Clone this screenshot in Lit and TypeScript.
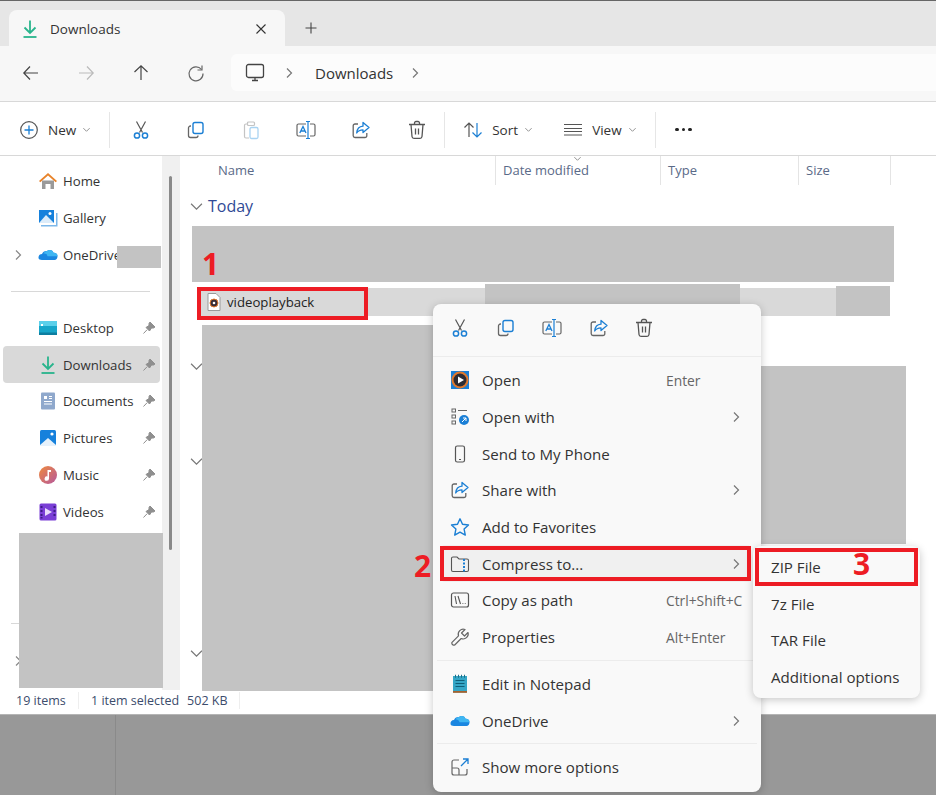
import { LitElement, html, css } from 'lit';
import { customElement } from 'lit/decorators.js';

// shared icons
const chevRight = html`<svg class="chev" viewBox="0 0 12 12"><path d="M4 1.5 8.5 6 4 10.5" fill="none" stroke="#777" stroke-width="1.2"/></svg>`;
const chevDown = html`<svg class="mini" viewBox="0 0 10 10"><path d="M1.5 3.5 5 7l3.5-3.5" fill="none" stroke="#888" stroke-width="1"/></svg>`;
const groupChev = html`<svg class="gchev" viewBox="0 0 12 12"><path d="M1 3.5 6 8.5l5-5" fill="none" stroke="#777" stroke-width="1.1"/></svg>`;
const twistChev = html`<svg class="chev" viewBox="0 0 12 12"><path d="M4 1.500 8.500 6 4 10.500" fill="none" stroke="#888" stroke-width="1.200"/></svg>`;

const cut = html`<svg class="ic" viewBox="0 0 20 20" fill="none"><path d="M5.5 1.5 11.5 12.5M14.5 1.5 8.5 12.5" stroke="#555" stroke-width="1.2"/><circle cx="6" cy="15.5" r="2.6" stroke="#1b7fd4" stroke-width="1.5"/><circle cx="14" cy="15.5" r="2.6" stroke="#1b7fd4" stroke-width="1.5"/></svg>`;
const copy = html`<svg class="ic" viewBox="0 0 20 20" fill="none"><path d="M5 6H4.500A2 2 0 0 0 2.500 8v7.500a2 2 0 0 0 2 2H10a2 2 0 0 0 2-2" stroke="#666" stroke-width="1.300"/><rect x="7" y="2.500" width="10" height="11" rx="2" stroke="#1b7fd4" stroke-width="1.400"/></svg>`;
const paste = html`<svg class="ic" viewBox="0 0 20 20" fill="none"><path d="M7 4H5a1.500 1.500 0 0 0-1.500 1.500v11A1.500 1.500 0 0 0 5 18h3" stroke="#c4c4c4" stroke-width="1.200"/><rect x="6.500" y="2" width="7" height="3.500" rx="1" stroke="#c4c4c4" stroke-width="1.200"/><rect x="9" y="7.500" width="8" height="11" rx="1.500" stroke="#a9d3f2" stroke-width="1.300"/></svg>`;
const rename = html`<svg class="ic wide" viewBox="0 0 22 20" fill="none"><path d="M11 4H3.500A1.500 1.500 0 0 0 2 5.500v9A1.500 1.500 0 0 0 3.500 16H11M15 4h3.500A1.500 1.500 0 0 1 20 5.500v9a1.500 1.500 0 0 1-1.500 1.500H15" stroke="#666" stroke-width="1.200"/><path d="M4.800 13 8 6.500l3 6.500M5.800 11h4.400" stroke="#1b7fd4" stroke-width="1.300"/><path d="M11 1.500h4M13 1.500v17M11 18.500h4" stroke="#1b7fd4" stroke-width="1.200"/></svg>`;
const share = html`<svg class="ic" viewBox="0 0 20 20" fill="none"><path d="M7 4H4a1.800 1.800 0 0 0-1.800 1.800v10A1.800 1.800 0 0 0 4 17.500h10a1.800 1.800 0 0 0 1.800-1.800V13" stroke="#666" stroke-width="1.300"/><path d="M12 2.500 18 7.500l-6 5V9.800c-3 0-5 1-6.300 3.200.3-4 2.500-6.500 6.300-6.800Z" stroke="#1b7fd4" stroke-width="1.300" stroke-linejoin="round"/></svg>`;
const trash = html`<svg class="ic" viewBox="0 0 20 20" fill="none"><path d="M2 4.500h16M7.500 4.500V3a1.500 1.500 0 0 1 1.500-1.500h2A1.500 1.500 0 0 1 12.500 3v1.500M4 4.500l1 12a2 2 0 0 0 2 1.800h6a2 2 0 0 0 2-1.800l1-12M8.500 8.500v6M11.500 8.500v6" stroke="#555" stroke-width="1.300"/></svg>`;
const cloud = html`<svg class="ic" viewBox="0 0 20 20"><path d="M.5 13a3.800 3.800 0 0 1 3.500-4 4.800 4.800 0 0 1 5-3c1.500-1.500 5.500-1.500 6.500 1.700a3.500 3.500 0 0 1 4 3.500c0 2-1.300 3.800-3 3.800H4c-2 0-3.500-.8-3.500-2Z" fill="#1a86e0"/><path d="M9 6c1.500-1.500 5.500-1.500 6.500 1.700a3.500 3.500 0 0 1 4 3.500H9.500C9 9 7.500 8.300 5.500 8.600 6.300 6.800 8 5.800 9 6Z" fill="#3fb6f2"/></svg>`;
const download = html`<svg class="ic" viewBox="0 0 20 20" fill="none"><path d="M10 1.500v12.500M4.500 8.500 10 14l5.500-5.500" stroke="#28b48c" stroke-width="1.800"/><path d="M3.500 18h13" stroke="#28b48c" stroke-width="1.800"/></svg>`;
const pin = html`<svg class="pin" viewBox="0 0 14 14"><path d="M8 1 13 6 11.500 7 9.500 7 7.500 10 4 6.500 7 4.500V2.500ZM5 8.800 1.500 12.500" fill="#8f8f8f" stroke="#8f8f8f" stroke-width="1"/></svg>`;

const navIcons: Record<string, unknown> = {
  home: html`<svg class="ic" viewBox="0 0 20 20"><path d="M4 9.500h12V18H12.500v-5h-5v5H4Z" fill="#9a9a9a"/><path d="M1 10 10 2l9 8-1.300 1.300L10 4.500 2.300 11.300Z" fill="#e8832a"/></svg>`,
  gallery: html`<svg class="ic" viewBox="0 0 20 20"><path d="M1 2h15v13H1Z" fill="#1681dc"/><path d="M1 15 8 7l8 8Z" fill="#dcecfa"/><circle cx="12" cy="5.500" r="1.500" fill="#fff"/><path d="M3 17h15V5h1.500v13.500H3Z" fill="#7db8ea"/></svg>`,
  desktop: html`<svg class="ic" viewBox="0 0 20 20"><rect x="1" y="3" width="18" height="14" rx="1.500" fill="#17a6c9"/><path d="M1 3h18v5H1Z" fill="#5bd0ea"/><rect x="1" y="14.500" width="18" height="2.500" fill="#0d7ea0"/><rect x="3" y="6" width="2" height="2" fill="#fff"/></svg>`,
  documents: html`<svg class="ic" viewBox="0 0 20 20"><rect x="3" y="1.500" width="14" height="17" rx="1" fill="#8fa8cc"/><path d="M6 5h3v3H6Zm5 0h3v1h-3Zm0 2h3v1h-3ZM6 10h8v1H6Zm0 2.500h8v1H6Z" fill="#fff"/></svg>`,
  pictures: html`<svg class="ic" viewBox="0 0 20 20"><rect x="2" y="2" width="16" height="16" rx="1.500" fill="#1681dc"/><path d="M2 17l8-7 8 7v1H2Z" fill="#e6f1fb"/><circle cx="14" cy="6" r="1.600" fill="#fff"/></svg>`,
  music: html`<svg class="ic" viewBox="0 0 20 20"><defs><linearGradient id="mu" x1="0" y1="0" x2="1" y2="1"><stop offset="0" stop-color="#ef8a3c"/><stop offset="1" stop-color="#b5589e"/></linearGradient></defs><circle cx="10" cy="10" r="9" fill="url(#mu)"/><path d="M9.500 5h3.500v2h-2v6.500a2.200 2.200 0 1 1-1.500-2Z" fill="#fff"/></svg>`,
  videos: html`<svg class="ic" viewBox="0 0 20 20"><rect x="1.500" y="1.500" width="17" height="17" rx="1.500" fill="#7a3fd6"/><path d="M7 6l7 4-7 4Z" fill="#e9ddfb"/><path d="M2.500 4h2v2h-2Zm0 4h2v2h-2Zm0 4h2v2h-2Zm0 3h2v1.500h-2ZM15.500 4h2v2h-2Zm0 4h2v2h-2Zm0 4h2v2h-2Z" fill="#3d1a86"/></svg>`,
};

const nav = [
  { key: 'home', label: 'Home' },
  { key: 'gallery', label: 'Gallery' },
  { key: 'cloud', label: 'OneDrive', twist: true },
  { sep: true },
  { key: 'desktop', label: 'Desktop', pin: true },
  { key: 'download', label: 'Downloads', pin: true, active: true },
  { key: 'documents', label: 'Documents', pin: true },
  { key: 'pictures', label: 'Pictures', pin: true },
  { key: 'music', label: 'Music', pin: true },
  { key: 'videos', label: 'Videos', pin: true },
];

const menuItems = [
  { icon: html`<svg class="ic" viewBox="0 0 20 20"><rect x="1" y="1" width="18" height="18" fill="#1a7fd6"/><circle cx="10" cy="10" r="8.500" fill="#e0782c"/><circle cx="10" cy="10" r="6.500" fill="#2c2c34"/><path d="M8 6.500 14 10l-6 3.500Z" fill="#fff"/></svg>`, label: 'Open', short: 'Enter' },
  { icon: html`<svg class="ic" viewBox="0 0 20 20" fill="none"><rect x="2" y="2" width="3.500" height="3" stroke="#666"/><rect x="2" y="8" width="3.500" height="3" stroke="#666"/><rect x="2" y="14" width="3.500" height="3" stroke="#666"/><path d="M8 3.500h9" stroke="#666"/><circle cx="14" cy="13" r="5" fill="#1a7fd6"/><path d="M12 15l4-4m-3 0h3v3" stroke="#fff"/></svg>`, label: 'Open with', sub: true },
  { icon: html`<svg class="ic" viewBox="0 0 20 20" fill="none"><rect x="5.500" y="2" width="9" height="16" rx="1.800" stroke="#555" stroke-width="1.200"/><path d="M9 15.500h2" stroke="#555"/></svg>`, label: 'Send to My Phone' },
  { icon: share, label: 'Share with', sub: true },
  { icon: html`<svg class="ic" viewBox="0 0 20 20" fill="none"><path d="M10 1.800 12.500 7.300l6 .7-4.400 4.100 1.200 6L10 15.100 4.700 18.100l1.200-6L1.500 8l6-.7Z" stroke="#1b7fd4" stroke-width="1.400" stroke-linejoin="round"/></svg>`, label: 'Add to Favorites' },
  { icon: html`<svg class="ic" viewBox="0 0 20 20" fill="none"><path d="M1.500 16V4.500A1.500 1.500 0 0 1 3 3h4l2 2h8a1.500 1.500 0 0 1 1.500 1.500V16A1.500 1.500 0 0 1 17 17.500H3A1.500 1.500 0 0 1 1.500 16Z" stroke="#555" stroke-width="1.100"/><path d="M14 5v12.500" stroke="#1b7fd4" stroke-width="2" stroke-dasharray="2 1.500"/></svg>`, label: 'Compress to...', sub: true, hot: true },
  { icon: html`<svg class="ic" viewBox="0 0 20 20" fill="none"><rect x="1.500" y="3" width="17" height="14" rx="2" stroke="#555" stroke-width="1.200"/><path d="M5 6l1.500 8M8 6l2.500 8M12.500 13.500h.8m1.500 0h.8" stroke="#555" stroke-width="1.100"/></svg>`, label: 'Copy as path', short: 'Ctrl+Shift+C' },
  { icon: html`<svg class="ic" viewBox="0 0 20 20" fill="none"><path d="M18 5.500 14.500 9 11.500 6 15 2.500a5 5 0 0 0-6.500 6.300L2 15.300a2 2 0 0 0 0 1.700l1 1a2 2 0 0 0 1.700 0l6.500-6.500A5 5 0 0 0 18 5.500Z" stroke="#666" stroke-width="1.200" stroke-linejoin="round"/></svg>`, label: 'Properties', short: 'Alt+Enter' },
  { sep: true },
  { icon: html`<svg class="ic" viewBox="0 0 20 20"><rect x="3" y="2" width="14" height="16.500" fill="#35a6c6"/><path d="M3 17h14v1.800H3Z" fill="#a5622f"/><path d="M5.500 6h9v1h-9Zm0 3h9v1h-9Zm0 3h9v1h-9Z" fill="#0f5f78"/><path d="M5 .8h1v3H5Zm3 0h1v3H8Zm3 0h1v3h-1Zm3 0h1v3h-1Z" fill="#1d6f88"/></svg>`, label: 'Edit in Notepad' },
  { icon: cloud, label: 'OneDrive', sub: true },
  { sep: true },
  { icon: html`<svg class="ic" viewBox="0 0 20 20" fill="none"><path d="M9 3H4a2 2 0 0 0-2 2v11a2 2 0 0 0 2 2h11a2 2 0 0 0 2-2v-4M2 11h5a2 2 0 0 1 2 2v5" stroke="#666" stroke-width="1.200"/><path d="M11 9l7-7m-5 0h5v5" stroke="#1b7fd4" stroke-width="1.300"/></svg>`, label: 'Show more options' },
];

@customElement('app-root')
export class AppRoot extends LitElement {
  static styles = css`
    :host {
      display: block;
      position: relative;
      width: 936px;
      height: 795px;
      overflow: hidden;
      background: #fff;
      font-family: "Open Sans", "Noto Sans", sans-serif;
      font-size: 13.2px;
      color: #333;
    }
    .page { display: flex; flex-direction: column; height: 795px; }
    svg { display: block; flex: none; }
    .ic { width: 20px; height: 20px; }
    .ic.wide { width: 22px; }
    .chev { width: 12px; height: 12px; }
    .mini { width: 9px; height: 9px; }
    .gchev { width: 13px; height: 13px; }
    .pin { width: 14px; height: 14px; }

    .tabs { height: 46px; flex: none; box-sizing: border-box; background: #e6e6e6; border-top: 1px solid #666; padding: 9px 0 0 9px; display: flex; }
    .tab { width: 276px; height: 37px; box-sizing: border-box; background: #f7f7f7; border-radius: 8px 8px 0 0; padding: 0 18px 0 11px; display: flex; align-items: center; gap: 10px; font-size: 13.500px; }
    .tab span { flex: 1; }
    .new-tab { margin: 12px 0 0 20px; }

    .address { height: 56px; flex: none; box-sizing: border-box; background: #f7f7f7; border-bottom: 1px solid #d8d8d8; display: flex; align-items: center; padding: 0 0 2px 21px; }
    .nav-btn { width: 20px; height: 20px; margin-right: 35px; }
    .crumbs { flex: 1; margin-left: -10px; height: 37px; background: #fcfcfc; border-radius: 6px 0 0 6px; display: flex; align-items: center; padding-left: 14px; font-size: 15px; }
    .crumbs .chev { margin: 0 20px 0 18px; }
    .crumbs .pc { width: 20px; height: 20px; }
    .crumbs .last { margin-left: -2px; }

    .toolbar { height: 54px; flex: none; box-sizing: border-box; border-bottom: 1px solid #d8d8d8; display: flex; align-items: center; padding-top: 2px; font-size: 13.500px; }
    .tool { display: flex; align-items: center; }
    .tool-new { width: 109px; padding-left: 19px; box-sizing: border-box; }
    .tool-new .label { margin: 0 6px 0 9px; }
    .vsep { width: 1px; height: 36px; background: #e6e6e6; flex: none; }
    .cell { width: 55.2px; display: flex; justify-content: center; }
    .icons { display: flex; margin-left: 3px; }
    .tool-sort { margin-left: 18px; width: 100px; }
    .tool-sort .label, .tool-view .label { margin: 0 6px 0 9px; }
    .tool-view { width: 92px; }
    .more { margin-left: 19px; display: flex; gap: 3px; }
    .more i { width: 3.500px; height: 3.500px; border-radius: 50%; background: #222; }

    .main { flex: 1; display: flex; min-height: 0; }
    .side { width: 162px; flex: none; box-sizing: border-box; padding: 7px 2px 0 3px; }
    .row { height: 36.8px; display: flex; align-items: center; padding-left: 9px; border-radius: 4px; }
    .row.active { background: #d9d9d9; }
    .twist { width: 26px; flex: none; }
    .row .label { flex: 1; margin-left: 5px; }
    .row .pin { margin-right: 4px; }
    .side hr { border: 0; height: 1px; background: #d8d8d8; margin: 18px 10px 17px 8px; }
    .side hr.lower { margin-top: 93px; margin-bottom: 18px; }
    .gutter { width: 17px; flex: none; background: #f0f0f0; display: flex; justify-content: center; padding-top: 20px; box-sizing: border-box; }
    .thumb { width: 3px; height: 374px; border-radius: 2px; background: #8a8a8a; }

    .files { flex: 1; padding-left: 1px; border-left: 1px solid #f0f0f0; min-width: 0; }
    .head { height: 29px; display: grid; grid-template-columns: 315px 165px 138px 92px; color: #5a6a88; font-size: 13px; }
    .head div { border-right: 1px solid #e4e4e4; padding: 5px 0 0 7px; box-sizing: border-box; position: relative; }
    .head div:first-child { padding-left: 37px; }
    .head .sorted { position: absolute; left: 77px; top: -2px; }
    .group { display: flex; align-items: center; height: 24px; margin: 9px 0 8px 9px; color: #2f4a96; font-size: 16px; gap: 5px; }
    .blank { height: 56px; width: 702px; margin-left: 11px; background: #c3c3c3; }
    .file { height: 28px; width: 693px; margin: 6px 0 0 16px; background: #d9d9d9; display: flex; align-items: center; padding-left: 10px; box-sizing: border-box; gap: 6px; color: #222; font-size: 13.200px; }
    .file svg { width: 14px; height: 18px; }
    .fold { position: absolute; left: 190px; }
    .fold.a { top: 360px; } .fold.b { top: 455px; } .fold.c { top: 647px; }

    .status { height: 24px; flex: none; box-sizing: border-box; display: flex; align-items: center; padding: 0 0 4px 16px; font-size: 12.500px; color: #3c4c6c; }
    .status span:nth-child(1) { width: 62px; border-right: 1px solid #eee; margin-right: 12px; }
    .status span:nth-child(2) { margin-right: 8px; }
    .status span:nth-child(3) { padding-right: 11px; border-right: 1px solid #eee; }
    .task { height: 81px; flex: none; box-sizing: border-box; background: #989898; border-top: 1px solid #b5b5b5; }
    .task div { width: 115px; height: 100%; border-right: 1px solid #8a8a8a; }

    .mask { position: absolute; background: #c3c3c3; }
    .m-drive { left: 117px; top: 246px; width: 44px; height: 22px; }
    .m-side { left: 19px; top: 533px; width: 144px; height: 155px; }
    .m-list { left: 202px; top: 325px; width: 232px; height: 366px; }
    .m-date { left: 485px; top: 284px; width: 255px; height: 20px; }
    .m-size { left: 836px; top: 286px; width: 54px; height: 30px; }
    .m-right { left: 761px; top: 366px; width: 145px; height: 178px; }

    .menu { position: absolute; background: #f9f9f9; border-radius: 8px; box-shadow: 0 2px 8px rgba(0, 0, 0, .22); color: #333; font-size: 15.100px; }
    .ctx { left: 433px; top: 304px; width: 328px; height: 488px; }
    .quick { height: 53px; box-sizing: border-box; border-bottom: 1px solid #ececec; display: flex; align-items: center; padding: 0 0 4px 17px; gap: 25.500px; }
    .list { padding-top: 5px; }
    .item { height: 36.7px; display: grid; grid-template-columns: 20px 196px 1fr 12px; align-items: center; padding: 0 19px 0 17px; }
    .item.hot { background: #f0f0f0; margin: 0 10px 0 8px; padding: 0 9px 0 9px; border-radius: 4px; }
    .item .label { margin-left: 12px; white-space: nowrap; }
    .item .short { font-size: 13.800px; color: #666; white-space: nowrap; }
    .item .chev { grid-column: 4; }
    .list hr { border: 0; height: 1px; background: #ececec; margin: 4px 4px 5px 4px; }

    .subm { left: 753px; top: 546px; width: 167px; height: 152px; padding-top: 2.500px; box-sizing: border-box; }
    .subitem { height: 36.8px; display: flex; align-items: center; padding-left: 18px; }

    .mark { position: absolute; box-sizing: border-box; border: 4px solid #ed1c24; }
    .mark1 { left: 197px; top: 287px; width: 171px; height: 33px; }
    .mark2 { left: 440px; top: 546px; width: 311px; height: 35px; }
    .mark3 { left: 755px; top: 548px; width: 163px; height: 38px; }
    .num { position: absolute; color: #ed1c24; font: bold 30px/1 "Open Sans", sans-serif; }
    .n1 { left: 202px; top: 249px; }
    .n2 { left: 414px; top: 551px; }
    .n3 { left: 853px; top: 549px; }
  `;

  renderNav() {
    return nav.map((n) => {
      if (n.sep) return html`<hr />`;
      const icon = n.key === 'cloud' ? cloud : n.key === 'download' ? download : navIcons[n.key!];
      return html`<div class="row ${n.active ? 'active' : ''}">
        <div class="twist">${n.twist ? twistChev : ''}</div>
        ${icon}
        <span class="label">${n.label}</span>
        ${n.pin ? pin : ''}
      </div>`;
    });
  }

  renderMenu() {
    return menuItems.map((m) => {
      if (m.sep) return html`<hr />`;
      return html`<div class="item ${m.hot ? 'hot' : ''}">
        ${m.icon}
        <span class="label">${m.label}</span>
        ${m.short ? html`<span class="short">${m.short}</span>` : ''}
        ${m.sub ? chevRight : ''}
      </div>`;
    });
  }

  render() {
    return html`
      <div class="page">
        <div class="tabs">
          <div class="tab">
            ${download}
            <span>Downloads</span>
            <svg class="chev" viewBox="0 0 12 12"><path d="M1.500 1.500l9 9m0-9-9 9" stroke="#333" stroke-width="1.100"/></svg>
          </div>
          <svg class="chev new-tab" viewBox="0 0 12 12"><path d="M6 .5v11M.5 6h11" stroke="#444" stroke-width="1.100"/></svg>
        </div>
        <div class="address">
          <svg class="nav-btn" viewBox="0 0 20 20" fill="none"><path d="M17 10H3M9 3.500 2.800 10 9 16.500" stroke="#444" stroke-width="1.200"/></svg>
          <svg class="nav-btn" viewBox="0 0 20 20" fill="none"><path d="M3 10h14M11 3.500l6.200 6.500L11 16.500" stroke="#bbb" stroke-width="1.200"/></svg>
          <svg class="nav-btn" viewBox="0 0 20 20" fill="none"><path d="M10 17V3M3.500 9 10 2.800 16.500 9" stroke="#444" stroke-width="1.200"/></svg>
          <svg class="nav-btn" viewBox="0 0 20 20" fill="none"><path d="M15.500 6.500A7 7 0 1 0 17 10.500" stroke="#666" stroke-width="1.200"/><path d="M16 2.500v4.500h-4.500" stroke="#666" stroke-width="1.200"/></svg>
          <div class="crumbs">
            <svg class="pc" viewBox="0 0 20 20" fill="none"><rect x="1.500" y="1.500" width="17" height="13" rx="2" stroke="#444" stroke-width="1.300"/><path d="M7 17.500h6M10 14.500v3" stroke="#444" stroke-width="1.300"/></svg>
            ${chevRight}
            <span>Downloads</span>
            <span class="last">${chevRight}</span>
          </div>
        </div>
        <div class="toolbar">
          <div class="tool tool-new">
            <svg class="ic" viewBox="0 0 20 20" fill="none"><circle cx="10" cy="10" r="8.300" stroke="#555" stroke-width="1.200"/><path d="M10 5.500v9M5.500 10h9" stroke="#1b7fd4" stroke-width="1.300"/></svg>
            <span class="label">New</span>${chevDown}
          </div>
          <div class="vsep"></div>
          <div class="icons">
            <div class="cell">${cut}</div><div class="cell">${copy}</div><div class="cell">${paste}</div>
            <div class="cell">${rename}</div><div class="cell">${share}</div><div class="cell">${trash}</div>
          </div>
          <div class="vsep"></div>
          <div class="tool tool-sort">
            <svg class="ic" viewBox="0 0 20 20" fill="none"><path d="M6 17V3M1.500 7.500 6 3l4.500 4.500" stroke="#555" stroke-width="1.200"/><path d="M14 3v14M9.500 12.500 14 17l4.500-4.500" stroke="#1b7fd4" stroke-width="1.200"/></svg>
            <span class="label">Sort</span>${chevDown}
          </div>
          <div class="tool tool-view">
            <svg class="ic" viewBox="0 0 20 20" fill="none"><path d="M1 4.500h18M1 8.500h18M1 11.500h18M1 15h18" stroke="#555" stroke-width="1"/></svg>
            <span class="label">View</span>${chevDown}
          </div>
          <div class="vsep"></div>
          <div class="more"><i></i><i></i><i></i></div>
        </div>
        <div class="main">
          <div class="side">
            ${this.renderNav()}
            <hr class="lower" />
            <div class="row"><div class="twist">${twistChev}</div></div>
          </div>
          <div class="gutter"><div class="thumb"></div></div>
          <div class="files">
            <div class="head">
              <div>Name</div>
              <div>Date modified<span class="sorted">${chevDown}</span></div>
              <div>Type</div>
              <div>Size</div>
            </div>
            <div class="group">${groupChev}<span>Today</span></div>
            <div class="blank"></div>
            <div class="file">
              <svg viewBox="0 0 14 18"><path d="M1 .5h8l4 4v13H1Z" fill="#fff" stroke="#999"/><circle cx="7" cy="10" r="4" fill="#3a2c34" stroke="#e0782c"/><circle cx="7" cy="10" r="1.300" fill="#fff"/></svg>
              <span>videoplayback</span>
            </div>
          </div>
        </div>
        <div class="status"><span>19 items</span><span>1 item selected</span><span>502 KB</span></div>
        <div class="task"><div></div></div>
      </div>

      <div class="fold a">${groupChev}</div>
      <div class="fold b">${groupChev}</div>
      <div class="fold c">${groupChev}</div>
      <div class="mask m-drive"></div>
      <div class="mask m-side"></div>
      <div class="mask m-list"></div>
      <div class="mask m-date"></div>
      <div class="mask m-size"></div>
      <div class="mask m-right"></div>

      <div class="menu ctx">
        <div class="quick">${cut}${copy}${rename}${share}${trash}</div>
        <div class="list">${this.renderMenu()}</div>
      </div>
      <div class="menu subm">
        <div class="subitem">ZIP File</div>
        <div class="subitem">7z File</div>
        <div class="subitem">TAR File</div>
        <div class="subitem">Additional options</div>
      </div>

      <div class="mark mark1"></div>
      <div class="mark mark2"></div>
      <div class="mark mark3"></div>
      <div class="num n1">1</div>
      <div class="num n2">2</div>
      <div class="num n3">3</div>
    `;
  }
}
